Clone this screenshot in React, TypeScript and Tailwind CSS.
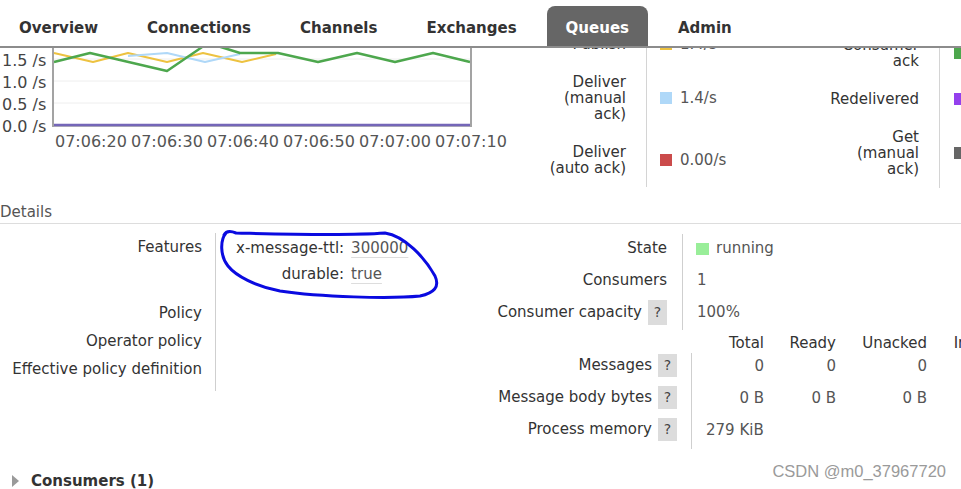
import React from "react";

const green = [[54,62],[90,53],[167,71],[208,43],[240,53],[278,53],[318,62],[357,53],[395,62],[433,53],[470,62]];
const yellow = [[54,53],[93,62],[128,53],[167,62],[203,53],[242,62],[276,54]];
const blue = [[128,56],[167,53],[205,62],[240,54]];
const pts = (a: number[][]) => a.map(([x, y]) => `${x - 52},${y - 20}`).join(" ");

function Help({ h = "h-[23px]" }: { h?: string }) {
  return (
    <span className={`w-[19px] ${h} bg-[#dcdcdc] flex items-center justify-center text-[#444] text-[14px]`}>?</span>
  );
}

function Chart() {
  return (
    <div className="w-[540px] shrink-0">
      <div className="flex h-[128px]">
        <div className="w-[52px] shrink-0 pt-[50px] pl-[2px] text-[16px] text-[#444]">
          <div className="h-[22px] leading-[22px]">1.5 /s</div>
          <div className="h-[22px] leading-[22px]">1.0 /s</div>
          <div className="h-[22px] leading-[22px]">0.5 /s</div>
          <div className="h-[22px] leading-[22px]">0.0 /s</div>
        </div>
        <svg width="421" height="108" viewBox="0 0 421 108" className="mt-[20px] shrink-0">
          <line x1="2" y1="39" x2="418" y2="39" stroke="#eeeeee" strokeWidth="1" />
          <line x1="2" y1="61" x2="418" y2="61" stroke="#eeeeee" strokeWidth="1" />
          <line x1="2" y1="83" x2="418" y2="83" stroke="#eeeeee" strokeWidth="1" />
          <polyline points={pts(yellow)} fill="none" stroke="#edc240" strokeWidth="2" strokeLinejoin="round" />
          <polyline points={pts(blue)} fill="none" stroke="#afd8f8" strokeWidth="2" strokeLinejoin="round" />
          <polyline points={pts(green)} fill="none" stroke="#4da74d" strokeWidth="2.5" strokeLinejoin="round" />
          <line x1="1" y1="0" x2="1" y2="107" stroke="#a3a3a3" strokeWidth="2" />
          <line x1="419" y1="0" x2="419" y2="107" stroke="#a3a3a3" strokeWidth="2" />
          <line x1="0" y1="106" x2="420" y2="106" stroke="#a3a3a3" strokeWidth="1.5" />
          <line x1="2" y1="105" x2="418" y2="105" stroke="#7466b8" strokeWidth="2.5" />
        </svg>
      </div>
      <div className="flex pl-[55px] mt-[5px] text-[16px] leading-[18px] text-[#555] whitespace-nowrap">
        <span className="w-[76px] shrink-0">07:06:20</span>
        <span className="w-[76px] shrink-0">07:06:30</span>
        <span className="w-[76px] shrink-0">07:06:40</span>
        <span className="w-[76px] shrink-0">07:06:50</span>
        <span className="w-[76px] shrink-0">07:07:00</span>
        <span className="w-[76px] shrink-0">07:07:10</span>
      </div>
    </div>
  );
}

function RateRow({ label, color, value, pl }: { label: React.ReactNode; color: string; value: string; pl: string }) {
  return (
    <>
      <div className="py-[11px] leading-[16px] text-right pr-[20px] border-r border-[#d4d4d4]">{label}</div>
      <div className={`flex items-center ${pl} gap-[8px] text-[#555]`}>
        <span className="w-[12px] h-[12px] shrink-0" style={{ backgroundColor: color }} />
        <span>{value}</span>
      </div>
    </>
  );
}

export default function App() {
  const tabs = ["Overview", "Connections", "Channels", "Exchanges", "Queues", "Admin"];
  return (
    <div className="relative w-[961px] h-[489px] overflow-hidden bg-white text-[#333] text-[15px] font-['DejaVu_Sans',sans-serif]">
      {/* sticky tab bar overlaying content */}
      <div className="absolute top-0 left-0 w-[961px] z-10 h-[48px] bg-white border-b-2 border-[#8c8c8c] flex items-end gap-[11px]">
        {tabs.map((t) => (
          <div
            key={t}
            className={
              t === "Queues"
                ? "h-[40px] px-[19px] pt-[4px] flex items-center font-bold text-white bg-[#666666] rounded-t-[8px]"
                : "h-[40px] px-[19px] pt-[4px] flex items-center font-bold text-[#333]"
            }
          >
            {t}
          </div>
        ))}
      </div>

      {/* rates section */}
      <div className="flex h-[192px] whitespace-nowrap">
        <Chart />
        <div className="w-[272px] shrink-0 mt-[25px] grid grid-cols-[107px_165px] content-start">
          <RateRow pl="pl-[13px]" label="Publish" color="#edc240" value="1.4/s" />
          <RateRow pl="pl-[13px]" label={<>Deliver<br />(manual<br />ack)</>} color="#afd8f8" value="1.4/s" />
          <RateRow pl="pl-[13px]" label={<>Deliver<br />(auto ack)</>} color="#cb4b4b" value="0.00/s" />
        </div>
        <div className="w-[300px] shrink-0 mt-[26px] grid grid-cols-[128px_172px] content-start">
          <RateRow pl="pl-[14px]" label={<>Consumer<br />ack</>} color="#4da74d" value="1.4/s" />
          <RateRow pl="pl-[14px]" label="Redelivered" color="#9440ed" value="0.00/s" />
          <RateRow pl="pl-[14px]" label={<>Get<br />(manual<br />ack)</>} color="#666666" value="0.00/s" />
        </div>
      </div>

      {/* Details heading */}
      <div className="h-[32px] flex items-end pb-[1px] border-b border-[#dddddd] text-[#555] leading-[20px]">Details</div>

      {/* Details body */}
      <div className="flex h-[240px] pt-[9px] whitespace-nowrap">
        <div className="w-[490px] shrink-0 grid grid-cols-[215px_275px] content-start">
          <div className="py-[6px] leading-[16px] text-right pr-[13px]">Features</div>
          <div className="border-l border-[#cfcfcf] pl-[20px] pt-[7px] pb-[17px]">
            <div className="grid grid-cols-[auto_auto] w-fit gap-x-[7px] gap-y-[10px] leading-[16px]">
              <span className="text-right">x-message-ttl:</span>
              <span className="text-[#555] underline decoration-[#dddddd] underline-offset-[4px]">300000</span>
              <span className="text-right">durable:</span>
              <span className="text-[#555] underline decoration-[#dddddd] underline-offset-[4px]">true</span>
            </div>
          </div>
          <div className="py-[6px] leading-[16px] text-right pr-[13px]">Policy</div>
          <div className="border-l border-[#cfcfcf]" />
          <div className="py-[6px] leading-[16px] text-right pr-[13px]">Operator policy</div>
          <div className="border-l border-[#cfcfcf]" />
          <div className="py-[6px] leading-[16px] text-right pr-[13px]">Effective policy definition</div>
          <div className="border-l border-[#cfcfcf]" />
          <div className="h-[8px]" />
          <div className="border-l border-[#cfcfcf]" />
        </div>

        <div className="shrink-0 flex flex-col pt-[1px]">
          <div className="grid grid-cols-[193px_200px]">
            <div className="h-[32px] pt-[2px] pr-[15px] border-r border-[#cfcfcf]">
              <div className="h-[25px] flex items-center justify-end">State</div>
            </div>
            <div className="h-[32px] pt-[2px] pl-[13px]">
              <div className="h-[25px] flex items-center gap-[7px] text-[#555]">
                <span className="w-[13px] h-[12px] bg-[#99ee99]" />
                <span>running</span>
              </div>
            </div>
            <div className="h-[32px] pt-[2px] pr-[15px] border-r border-[#cfcfcf]">
              <div className="h-[25px] flex items-center justify-end">Consumers</div>
            </div>
            <div className="h-[32px] pt-[2px] pl-[14px]">
              <div className="h-[25px] flex items-center text-[#555]">1</div>
            </div>
            <div className="h-[32px] pt-[2px] pr-[15px] border-r border-[#cfcfcf]">
              <div className="h-[25px] flex items-center justify-end gap-[6px]">
                <span>Consumer capacity</span>
                <Help h="h-[25px]" />
              </div>
            </div>
            <div className="h-[32px] pt-[2px] pl-[14px]">
              <div className="h-[25px] flex items-center text-[#555]">100%</div>
            </div>
          </div>

          <div className="grid grid-cols-[202px_72px_72px_91px_108px]">
            <div className="h-[23px]" />
            <div className="h-[23px] pt-[5px] leading-[16px] text-right">Total</div>
            <div className="h-[23px] pt-[5px] leading-[16px] text-right">Ready</div>
            <div className="h-[23px] pt-[5px] leading-[16px] text-right">Unacked</div>
            <div className="h-[23px] pt-[5px] leading-[16px] text-right">In memory</div>

            <div className="h-[32px] pt-[1px] pr-[14px] border-r border-[#cfcfcf]">
              <div className="h-[23px] flex items-center justify-end gap-[6px]"><span>Messages</span><Help /></div>
            </div>
            <div className="h-[32px] pt-[2px] text-right text-[#555]"><div className="h-[23px] leading-[23px]">0</div></div>
            <div className="h-[32px] pt-[2px] text-right text-[#555]"><div className="h-[23px] leading-[23px]">0</div></div>
            <div className="h-[32px] pt-[2px] text-right text-[#555]"><div className="h-[23px] leading-[23px]">0</div></div>
            <div className="h-[32px] pt-[2px] text-right text-[#555]"><div className="h-[23px] leading-[23px]">0</div></div>

            <div className="h-[32px] pt-[1px] pr-[14px] border-r border-[#cfcfcf]">
              <div className="h-[23px] flex items-center justify-end gap-[6px]"><span>Message body bytes</span><Help /></div>
            </div>
            <div className="h-[32px] pt-[2px] text-right text-[#555]"><div className="h-[23px] leading-[23px]">0 B</div></div>
            <div className="h-[32px] pt-[2px] text-right text-[#555]"><div className="h-[23px] leading-[23px]">0 B</div></div>
            <div className="h-[32px] pt-[2px] text-right text-[#555]"><div className="h-[23px] leading-[23px]">0 B</div></div>
            <div className="h-[32px] pt-[2px] text-right text-[#555]"><div className="h-[23px] leading-[23px]">0 B</div></div>

            <div className="h-[32px] pt-[1px] pr-[14px] border-r border-[#cfcfcf]">
              <div className="h-[23px] flex items-center justify-end gap-[6px]"><span>Process memory</span><Help /></div>
            </div>
            <div className="col-span-4 h-[32px] pt-[2px] pl-[14px] text-[#555]"><div className="h-[23px] leading-[23px]">279 KiB</div></div>
          </div>
        </div>
      </div>

      {/* Consumers collapsible */}
      <div className="pt-[8px] pl-[12px] flex items-center leading-[18px]">
        <span className="w-0 h-0 border-y-[6.5px] border-y-transparent border-l-[7px] border-l-[#9a9a9a] mr-[12px]" />
        <span className="font-bold text-[#333]">Consumers (1)</span>
      </div>

      {/* hand-drawn annotation */}
      <svg className="absolute left-0 top-0 pointer-events-none" width="961" height="489" viewBox="0 0 961 489">
        <path
          d="M 224 235 C 226 231, 231 231, 236 233 C 280 234, 345 236, 385 233 C 405 236, 425 258, 435 276 C 440 287, 434 293, 420 296 C 390 299, 320 297, 280 291 C 255 286, 236 276, 228 266 C 220 256, 220 240, 226 233"
          fill="none"
          stroke="#0a0ae0"
          strokeWidth="3"
          strokeLinecap="round"
          strokeLinejoin="round"
        />
      </svg>

      {/* watermark */}
      <div className="absolute right-[15px] top-[461px] text-[16.5px] leading-[20px] text-[#9a9a9a] font-['Liberation_Sans',Arial,sans-serif]">
        CSDN @m0_37967720
      </div>
    </div>
  );
}
